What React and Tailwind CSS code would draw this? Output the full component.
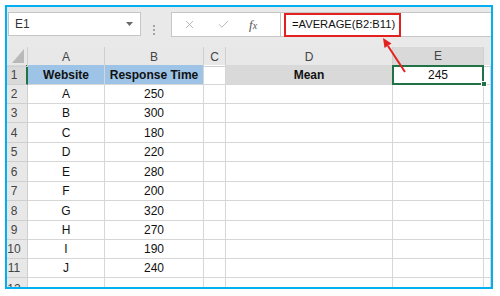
import { Check, X } from "lucide-react";

const COLS = "grid grid-cols-[21px_77px_99px_22px_167px_91px_1fr]";
const font = { fontFamily: '"Liberation Sans", Arial, sans-serif' };

// website, response time, row height class
const data = [
  ["A", 250, "h-[19px]"],
  ["B", 300, "h-[19px]"],
  ["C", 180, "h-[20px]"],
  ["D", 220, "h-[19px]"],
  ["E", 280, "h-[20px]"],
  ["F", 200, "h-[19px]"],
  ["G", 320, "h-[20px]"],
  ["H", 270, "h-[19px]"],
  ["I", 190, "h-[19px]"],
  ["J", 240, "h-[19px]"],
];

function RowHead({ children, active }) {
  return (
    <div
      className={
        active
          ? "flex items-center justify-center border-b border-r-2 border-b-[#cfcfcf] border-r-[#217346] bg-[#d9d9d9] pr-[5px] text-[12px] text-[#444]"
          : "flex items-center justify-center border-b border-r border-[#cfcfcf] bg-[#e8e8e8] pr-[6px] text-[12px] text-[#444]"
      }
    >
      {children}
    </div>
  );
}

function Cell({ children, className = "" }) {
  return (
    <div
      className={`flex items-center justify-center border-b border-r border-[#d6d6d6] text-[12px] text-[#111] ${className}`}
    >
      {children}
    </div>
  );
}

function FormulaBar() {
  return (
    <div className="flex h-[40px] shrink-0 bg-[#e9e9e9] pl-[1px] pt-[5px]">
      {/* name box */}
      <div className="flex h-[24px] w-[133px] items-center justify-between border border-[#c6c6c6] bg-white pl-[6px] pr-[7px] text-[12px] text-[#333]">
        <span>E1</span>
        <svg width="7" height="4" viewBox="0 0 7 4">
          <polygon points="0,0 7,0 3.5,4" fill="#6a6a6a" />
        </svg>
      </div>
      {/* dots */}
      <div className="flex w-[30px] flex-col items-center justify-center gap-[2px] pr-[4px]">
        <span className="h-[2px] w-[2px] bg-[#a5a5a5]" />
        <span className="h-[2px] w-[2px] bg-[#a5a5a5]" />
        <span className="h-[2px] w-[2px] bg-[#a5a5a5]" />
      </div>
      {/* cancel / enter / fx */}
      <div className="flex h-[25px] w-[109px] items-center border-y border-l border-[#c6c6c6] bg-white pl-[11px]">
        <X size={13} strokeWidth={1.4} color="#a3a3a3" />
        <Check size={13} strokeWidth={1.4} color="#a3a3a3" className="ml-[21px]" />
        <span
          className="ml-[19px] text-[13px] italic text-[#555]"
          style={{ fontFamily: '"Liberation Serif", serif' }}
        >
          f<span className="text-[10px]">x</span>
        </span>
      </div>
      {/* formula input */}
      <div className="flex h-[25px] flex-1 items-center border border-r-0 border-[#c6c6c6] bg-white pl-[3px]">
        <span className="flex h-[24px] items-center border-2 border-[#e3221f] pl-[6px] pr-[4px] text-[11.2px] text-[#111]">
          =AVERAGE(B2:B11)
        </span>
      </div>
    </div>
  );
}

export default function App() {
  return (
    <div className="h-[296px] w-[500px] bg-white pl-[5px] pt-[5px]" style={font}>
      <div className="h-[284px] w-[488px] border-2 border-[#00b0f0]">
        <div className="relative flex h-full w-full flex-col overflow-hidden bg-white">
          <FormulaBar />

          {/* column headers */}
          <div className={`${COLS} h-[18px] shrink-0 bg-[#e8e8e8] text-[12px] text-[#444]`}>
            <div className="relative border-b border-r border-[#cfcfcf]">
              <svg className="absolute left-[5px] top-[2px]" width="12" height="14" viewBox="0 0 12 14">
                <polygon points="12,0 12,14 0,14" fill="#b9b9b9" />
              </svg>
            </div>
            {["A", "B", "C", "D"].map((c) => (
              <div key={c} className="flex items-center justify-center border-b border-r border-[#cfcfcf]">
                {c}
              </div>
            ))}
            <div className="flex items-center justify-center border-b-2 border-r border-b-[#217346] border-r-[#cfcfcf] bg-[#d9d9d9]">
              E
            </div>
            <div className="border-b border-[#cfcfcf]" />
          </div>

          {/* row 1 */}
          <div className={`${COLS} h-[20px] shrink-0`}>
            <RowHead active>1</RowHead>
            <Cell className="bg-[#9dc3e6] text-[12.5px] font-bold">Website</Cell>
            <Cell className="bg-[#9dc3e6] text-[12.5px] font-bold">Response Time</Cell>
            <Cell />
            <Cell className="bg-[#d9d9d9] text-[12.5px] font-bold">Mean</Cell>
            <Cell className="relative">
              245
              <div className="absolute -bottom-[1px] -left-[1px] -right-[1px] top-0 border-2 border-[#217346]" />
              <div className="absolute -bottom-[3px] -right-[4px] h-[6px] w-[6px] border border-white bg-[#217346]" />
            </Cell>
            <Cell />
          </div>

          {/* rows 2 - 11 */}
          {data.map(([site, time, h], i) => (
            <div key={site} className={`${COLS} ${h} shrink-0`}>
              <RowHead>{i + 2}</RowHead>
              <Cell>{site}</Cell>
              <Cell>{time}</Cell>
              <Cell />
              <Cell />
              <Cell />
              <Cell />
            </div>
          ))}

          {/* row 12, cut off */}
          <div className={`${COLS} flex-1`}>
            <div className="flex items-start justify-center overflow-hidden border-r border-[#cfcfcf] bg-[#e8e8e8] pr-[6px] pt-[4px] text-[12px] leading-[14px] text-[#444]">
              12
            </div>
            <Cell />
            <Cell />
            <Cell />
            <Cell />
            <Cell />
            <Cell />
          </div>

          {/* callout arrow */}
          <svg className="pointer-events-none absolute left-0 top-0" width="484" height="280" viewBox="0 0 484 280">
            <line x1="398" y1="65" x2="381" y2="39" stroke="#e3221f" strokeWidth="2" />
            <polygon points="376,31 384.5,36.5 377.5,41" fill="#e3221f" />
          </svg>
        </div>
      </div>
    </div>
  );
}
